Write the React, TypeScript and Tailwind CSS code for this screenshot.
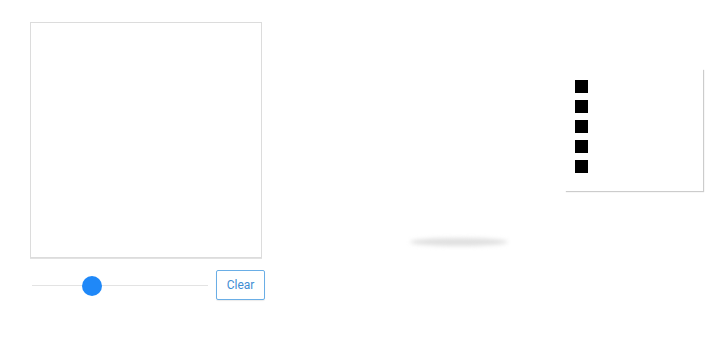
import React from 'react';

export default function App() {
  const squares = [0, 1, 2, 3, 4];

  return (
    <div className="w-[720px] h-[352px] bg-white overflow-hidden font-['Roboto',_sans-serif]">
      <div className="flex items-start pt-[22px] pl-[30px]">
        {/* drawing pad */}
        <div className="w-[235px] flex flex-col">
          <div className="w-[232px] h-[236px] border border-[#dcdcdc] shadow-[0_1px_0_#e2e2e2] bg-white"></div>
          <div className="flex items-center mt-[12px]">
            <div className="relative ml-[2px] w-[176px] h-[30px] flex items-center">
              <div className="w-full h-px bg-[#e3e3e3]"></div>
              <div className="absolute left-[50px] top-[6px] w-[20px] h-[20px] rounded-full bg-[#1f88f8]"></div>
            </div>
            <button className="ml-[8px] w-[49px] h-[30px] border border-[#6aaee6] rounded-[2px] text-[12px] text-[#3f8dd3] bg-white shadow-[0_1px_1px_rgba(0,0,0,0.08)]">
              Clear
            </button>
          </div>
        </div>

        {/* floor shadow */}
        <div className="ml-[145px] mt-[216px] w-[98px] h-[8px] rounded-[50%] bg-[#e0e0e0] blur-[2px]"></div>

        {/* list card */}
        <div className="ml-[57px] mt-[47px] w-[138px] h-[122px] bg-white shadow-[1px_1px_1px_#cccccc] flex flex-col gap-[7px] pt-[11px] pl-[10px]">
          {squares.map((i) => (
            <div key={i} className="w-[13px] h-[13px] bg-black"></div>
          ))}
        </div>
      </div>
    </div>
  );
}
